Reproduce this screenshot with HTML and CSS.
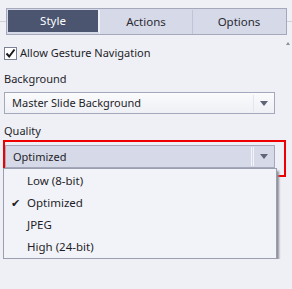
FILE: index.html
```html
<!DOCTYPE html>
<html lang="en">
<head>
  <meta charset="UTF-8" />
  <title>Style panel</title>
  <link rel="stylesheet" href="styles.css">
</head>
<body>
  <div class="tab-row">
    <div class="tabs">
      <div class="tab active">Style</div>
      <div class="tab">Actions</div>
      <div class="tab">Options</div>
    </div>
  </div>
  <span class="scroll-mark"></span>

  <label class="check">
    <span class="box">
      <svg width="11" height="11" viewBox="0 0 11 11"><path d="M1.5 5.5 L4.2 8.5 L9.5 1.5" fill="none" stroke="#1a1a1a" stroke-width="2"/></svg>
    </span>
    Allow Gesture Navigation
  </label>

  <div class="field-label">Background</div>
  <div class="select">
    <span class="value">Master Slide Background</span>
    <span class="sep"></span>
    <span class="arrow"></span>
  </div>

  <div class="field-label quality">Quality</div>
  <div class="highlight">
    <div class="select open">
      <span class="value">Optimized</span>
      <span class="sep"></span>
      <span class="arrow"></span>
    </div>
  </div>

  <ul class="menu">
    <li>Low (8-bit)</li>
    <li class="checked">Optimized</li>
    <li>JPEG</li>
    <li>High (24-bit)</li>
  </ul>
</body>
</html>
```

FILE: styles.css
```css
body {
  margin: 0;
  background-color: #eff0f6;
  font-family: "Noto Sans", sans-serif;
  font-size: 11px;
  line-height: 16px;
  color: #1e1e28;
  position: relative;
}

.tab-row {
  padding: 8px 6px 0;
  background: linear-gradient(#cfd1da, #cfd1da) 0 21px / 100% 1px no-repeat;
}

.tabs {
  display: flex;
  height: 24px;
  border: 1px solid #a4a8ba;
  background-color: #d6d9e8;
  padding: 1px 1px 0 1px;
  width: 277px;
  box-sizing: content-box;
  font-size: 11.5px;
}

.tab {
  flex: 1;
  text-align: center;
  line-height: 24px;
  color: #2a2a33;
  border-left: 1px solid #eef0f7;
}

.tab:nth-child(3) {
  border-left: 1px solid #c0c4d6;
}

.tab.active {
  flex: 0 0 90px;
  background-color: #4b5570;
  color: #fff;
  border-left: none;
  height: 22px;
  line-height: 22px;
  border-right: 1px solid #eef0f7;
}

.scroll-mark {
  position: absolute;
  right: 2px;
  top: 42px;
  width: 0;
  height: 0;
  border-left: 2px solid transparent;
  border-right: 2px solid transparent;
  border-bottom: 3px solid #8a8e9c;
}

.check {
  display: flex;
  align-items: center;
  margin: 11px 0 0 4px;
  gap: 3px;
  height: 14px;
}

.box {
  width: 11px;
  height: 11px;
  border: 1px solid #7d8194;
  background-color: #fff;
  display: flex;
}

.field-label {
  margin: 11px 0 0 4px;
  height: 16px;
}

.field-label.quality {
  margin-top: 9px;
}

.select {
  display: flex;
  align-items: center;
  margin: 5px 0 0 4px;
  width: 269px;
  height: 20px;
  border: 1px solid #a4a8ba;
  background: linear-gradient(#fbfbfd, #eef0f5);
}

.select .value {
  flex: 1;
  padding-left: 7px;
}

.select .sep {
  width: 1px;
  height: 17px;
  background-color: #e4e6ee;
  margin-right: 6px;
}

.select .arrow {
  width: 0;
  height: 0;
  border-left: 4px solid transparent;
  border-right: 4px solid transparent;
  border-top: 5px solid #5f6477;
  margin-right: 6px;
}

.highlight {
  margin: 1px 0 0 3px;
  width: 279px;
  height: 33px;
  border: 2px solid #ee0000;
}

.highlight .select {
  margin: 3px 0 0 0;
  width: 268px;
  height: 21px;
  background: #d6d9e8;
}

.highlight .sep {
  width: 3px;
  border-left: 1px solid #f4f5fa;
  border-right: 1px solid #f4f5fa;
  background-color: #d6d9e8;
  height: 19px;
  box-sizing: border-box;
}

.menu {
  list-style: none;
  margin: -9px 0 0 3px;
  padding: 1px 0 0;
  width: 272px;
  border: 1px solid #9a9eae;
  background-color: #f2f3f9;
  box-shadow: 2px 3px 2px #8d8f97;
  position: relative;
  font-size: 11.5px;
}

.menu li {
  height: 22px;
  line-height: 22px;
  padding-left: 23px;
}

.menu li.checked::before {
  content: "\2714";
  position: absolute;
  left: 7px;
  font-size: 11px;
}
```
